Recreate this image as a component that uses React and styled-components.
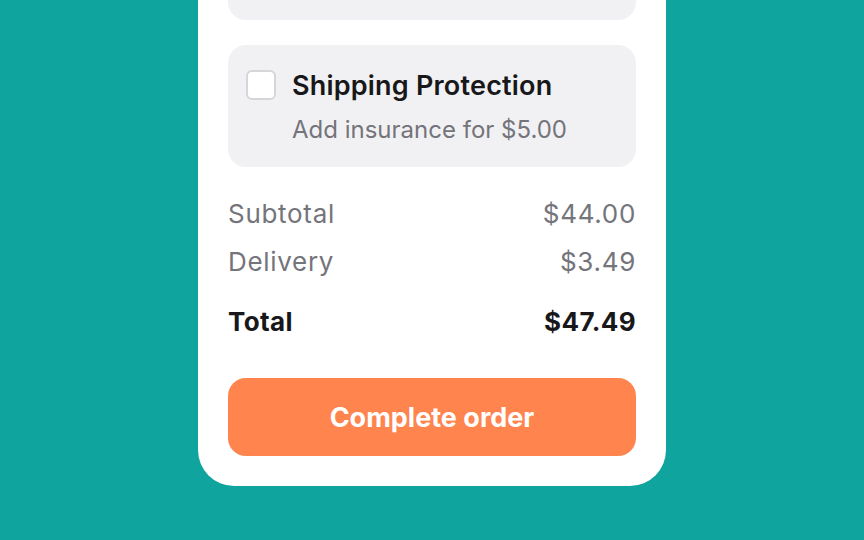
import React from 'react'
import styled, { createGlobalStyle } from 'styled-components'

const GlobalStyle = createGlobalStyle`
  * { box-sizing: border-box; }
  html, body { margin: 0; padding: 0; }
  body {
    background: #0fa49d;
    font-family: Inter, "Noto Sans", sans-serif;
  }
`

const Page = () => {
  return (
    <Screen>
      <GlobalStyle />
      <Card>
        <ItemBox />
        <OptionBox>
          <Check type="checkbox" />
          <div>
            <OptionTitle>Shipping Protection</OptionTitle>
            <OptionNote>Add insurance for $5.00</OptionNote>
          </div>
        </OptionBox>
        <Summary>
          <Line>
            <span>Subtotal</span>
            <span>$44.00</span>
          </Line>
          <Line>
            <span>Delivery</span>
            <span>$3.49</span>
          </Line>
          <Line total>
            <span>Total</span>
            <span>$47.49</span>
          </Line>
        </Summary>
        <OrderButton>Complete order</OrderButton>
      </Card>
    </Screen>
  )
}

const Screen = styled.div`
  height: 540px;
  overflow: hidden;
  display: flex;
  flex-direction: column;
  justify-content: flex-end;
  align-items: center;
`

const Card = styled.div`
  width: 468px;
  flex-shrink: 0;
  background: #fff;
  border-radius: 36px;
  padding: 30px;
  margin-bottom: 54px;
  display: flex;
  flex-direction: column;
`

const ItemBox = styled.div`
  height: 120px;
  flex-shrink: 0;
  background: #f1f1f3;
  border-radius: 18px;
  margin-bottom: 25px;
`

const OptionBox = styled.label`
  display: flex;
  align-items: flex-start;
  gap: 16px;
  flex-shrink: 0;
  background: #f1f1f3;
  border-radius: 18px;
  padding: 24px 18px 22px;
  height: 122px;
`

const Check = styled.input`
  appearance: none;
  margin: 0;
  width: 30px;
  height: 30px;
  flex-shrink: 0;
  background: #fff;
  border: 2px solid #d6d6da;
  border-radius: 6px;
  margin-top: 1px;
`

const OptionTitle = styled.div`
  font-size: 27px;
  line-height: 34px;
  font-weight: 600;
  letter-spacing: 0.2px;
  color: #18181b;
`

const OptionNote = styled.div`
  margin-top: 12px;
  font-size: 24px;
  line-height: 30px;
  color: #74747b;
`

const Summary = styled.div`
  display: flex;
  flex-direction: column;
  gap: 16px;
  margin-top: 31px;
`

const Line = styled.div`
  display: flex;
  justify-content: space-between;
  font-size: 26px;
  line-height: 32px;
  letter-spacing: ${p => (p.total ? '0.4px' : '0.7px')};
  color: ${p => (p.total ? '#18181b' : '#74747b')};
  font-weight: ${p => (p.total ? 700 : 400)};
  margin-top: ${p => (p.total ? '12px' : '0')};
`

const OrderButton = styled.button`
  margin-top: 40px;
  height: 78px;
  flex-shrink: 0;
  border: none;
  border-radius: 18px;
  background: #ff844e;
  color: #fff;
  font-family: Inter, "Noto Sans", sans-serif;
  font-size: 27px;
  font-weight: 700;
  cursor: pointer;
`

export default Page
